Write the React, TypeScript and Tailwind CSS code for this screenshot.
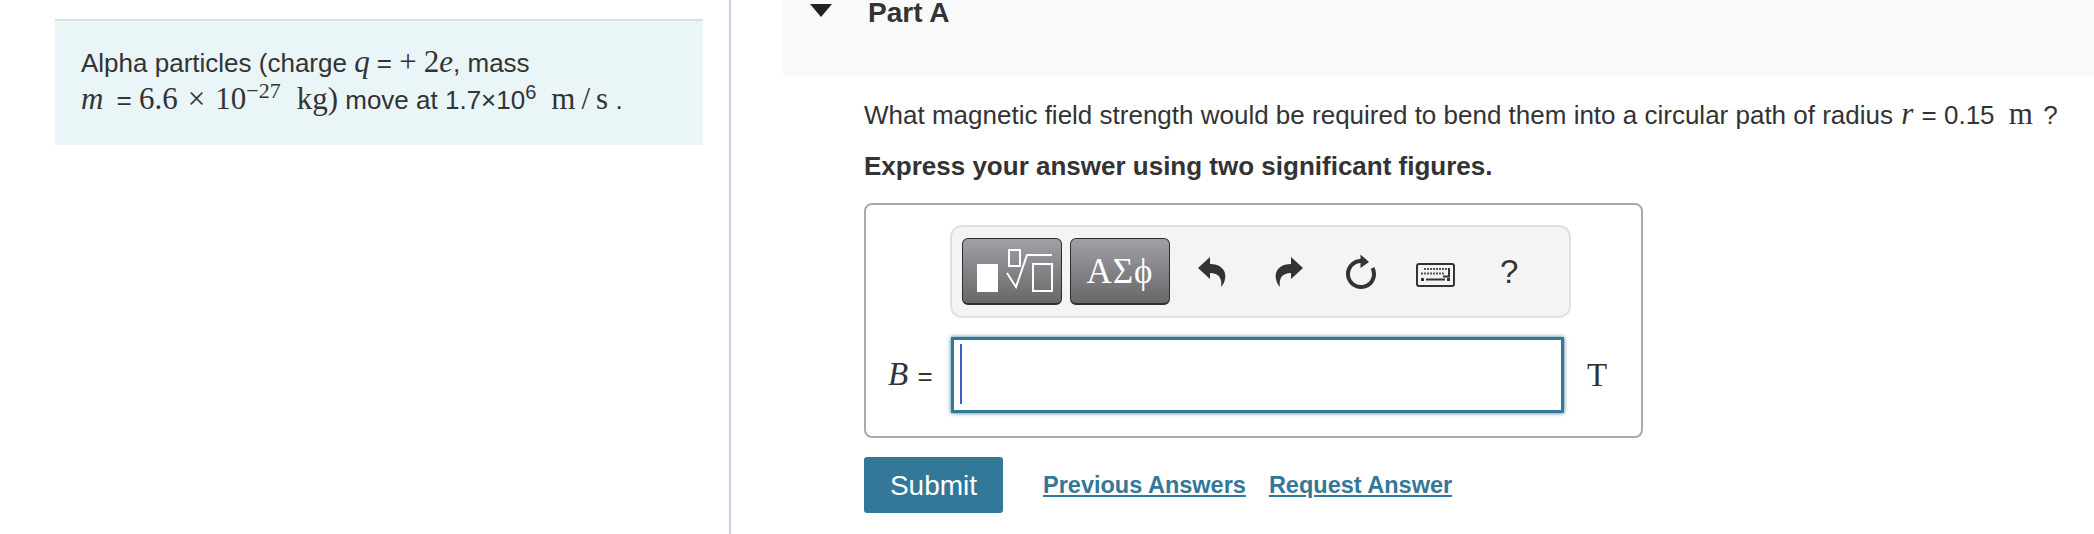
import * as React from 'react';

const Serif = ({ children, className = '' }: { children: React.ReactNode; className?: string }) => (
  <span className={`font-['Liberation_Serif',serif] ${className}`}>{children}</span>
);

const MathVar = ({ children, className = '' }: { children: React.ReactNode; className?: string }) => (
  <span className={`font-['Liberation_Serif',serif] italic text-[31px] ${className}`}>{children}</span>
);

const UndoIcon = ({ flip = false }: { flip?: boolean }) => (
  <svg width="28" height="30" viewBox="0 0 28 30" className={flip ? '-scale-x-100' : ''}>
    <path d="M0 11 L12 0 V7 C22 7 29 13 27 22 C26.5 25 25 28 23 30 C24 24 23 16 12 16 V22 Z" fill="#333" />
  </svg>
);

const ResetIcon = () => (
  <svg width="32" height="36" viewBox="0 0 32 36">
    <path d="M16 7 A13 13 0 1 0 27.5 14" fill="none" stroke="#333" strokeWidth="4" />
    <path d="M15.5 0.5 L24 8 L15.5 14 Z" fill="#333" />
  </svg>
);

const KeyboardIcon = () => {
  const top = [8, 11, 14, 17, 20, 23, 26, 29];
  const mid = [5, 8, 11, 14, 17, 20, 23, 26];
  return (
    <svg width="39" height="24" viewBox="0 0 39 24">
      <rect x="1" y="1" width="37" height="22" rx="2" fill="#f4f4f4" stroke="#333" strokeWidth="2" />
      {top.map((x) => (
        <rect key={x} x={x} y="5" width="2" height="2" fill="#555" />
      ))}
      {mid.map((x) => (
        <rect key={x} x={x} y="9.5" width="2" height="2" fill="#555" />
      ))}
      <path d="M33 5 V13.5 H27" fill="none" stroke="#333" strokeWidth="2" />
      <rect x="5" y="15" width="3" height="3" fill="#333" />
      <rect x="10" y="15.5" width="19" height="2" fill="#333" />
      <rect x="31" y="15" width="3" height="3" fill="#333" />
    </svg>
  );
};

const TemplateIcon = () => (
  <svg width="98" height="65" viewBox="0 0 98 65">
    <rect x="14" y="25" width="21" height="28" fill="#fff" />
    <rect x="46" y="11" width="11" height="16" fill="none" stroke="#fff" strokeWidth="2" />
    <path d="M44 34 L53 48 L64 16 H89" fill="none" stroke="#fff" strokeWidth="2" />
    <rect x="70" y="25" width="19" height="27" fill="none" stroke="#fff" strokeWidth="2" />
  </svg>
);

const ToolButton = ({ children }: { children: React.ReactNode }) => (
  <button className="w-[100px] h-[67px] flex items-center justify-center rounded-[6px] border border-[#2e2e2e] border-b-2 bg-linear-to-b from-[#a0a0a8] to-[#686868]">
    {children}
  </button>
);

export default function App() {
  return (
    <div className="w-[2094px] h-[534px] overflow-hidden bg-white flex font-['Liberation_Sans',sans-serif] text-[#333] text-[26px] leading-[37px]">
      <div className="w-[731px] shrink-0 h-full border-r-2 border-[#c5d3e6] pl-[55px] pr-[26px] pt-[19px]">
        <div className="h-[126px] border-t-2 border-[#dedede] bg-[#e9f5f7] pl-[26px] pt-[22px]">
          <p className="h-[37px]">
            Alpha particles (charge <MathVar>q</MathVar> = <Serif className="text-[31px]"><span className="mr-[7px]">+</span>2<i>e</i></Serif>, mass
          </p>
          <p className="h-[37px] whitespace-nowrap">
            <MathVar className="tracking-[6px]">m</MathVar> = <Serif className="text-[31px]">6.6<span className="mx-[10px]">×</span>10<sup className="text-[22px]">−27</sup><span className="ml-[16px]">kg)</span></Serif> move at 1.7×10<sup className="text-[20px]">6</sup>
            <Serif className="text-[31px] ml-[15px]">m<span className="mx-[6px]">/</span>s</Serif> .
          </p>
        </div>
      </div>

      <div className="flex-1 pl-[52px]">
        <div className="h-[77px] bg-[#f9f9f9] flex items-start pl-[27px]">
          <svg width="22" height="13" viewBox="0 0 22 13" className="mt-[4px]">
            <path d="M0 0 H22 L11 13 Z" fill="#222" />
          </svg>
          <span className="ml-[36px] font-bold leading-[26px] text-[28px]">Part A</span>
        </div>

        <div className="pl-[81px]">
          <p className="mt-[18px] whitespace-nowrap">
            What magnetic field strength would be required to bend them into a circular path of radius <MathVar className="mx-[1px]">r</MathVar> = 0.15 <Serif className="text-[31px] ml-[7px] tracking-[3px]">m</Serif> ?
          </p>
          <p className="mt-[14px] font-bold">Express your answer using two significant figures.</p>

          <div className="mt-[18px] w-[779px] h-[235px] border-2 border-[#aaa] rounded-[8px] pt-[20px]">
            <div className="ml-[84px] w-[621px] h-[93px] border-2 border-[#e0e0e0] rounded-[12px] bg-[#f4f4f4] flex items-center pl-[10px]">
              <ToolButton>
                <TemplateIcon />
              </ToolButton>
              <div className="ml-[8px]">
                <ToolButton>
                  <Serif className="text-white text-[35px] tracking-[1px]">ΑΣϕ</Serif>
                </ToolButton>
              </div>
              <div className="ml-[28px] flex items-center">
                <UndoIcon />
                <div className="ml-[49px]">
                  <UndoIcon flip />
                </div>
                <div className="ml-[42px]">
                  <ResetIcon />
                </div>
                <div className="ml-[39px] mt-[6px]">
                  <KeyboardIcon />
                </div>
                <span className="ml-[45px] text-[33px] leading-none">?</span>
              </div>
            </div>

            <div className="flex items-center mt-[19px]">
              <div className="w-[85px] pl-[22px] whitespace-nowrap">
                <span className="font-['Liberation_Serif',serif] italic text-[33px] mr-[2px]">B</span> =
              </div>
              <div className="w-[613px] h-[76px] border-[3px] border-[#337799] bg-white shadow-[0_0_4px_#337799] pl-[6px] pt-[4px]">
                <div className="w-[2px] h-[60px] bg-[#3b5bd0]" />
              </div>
              <Serif className="ml-[23px] text-[33px]">T</Serif>
            </div>
          </div>

          <div className="mt-[19px] flex items-center">
            <button className="w-[139px] h-[56px] bg-[#337899] text-white rounded-[3px] text-[28px]">Submit</button>
            <a href="#" className="ml-[40px] font-bold underline text-[#337799] text-[23.5px]">Previous Answers</a>
            <a href="#" className="ml-[23px] font-bold underline text-[#337799] text-[23.5px]">Request Answer</a>
          </div>
        </div>
      </div>
    </div>
  );
}
